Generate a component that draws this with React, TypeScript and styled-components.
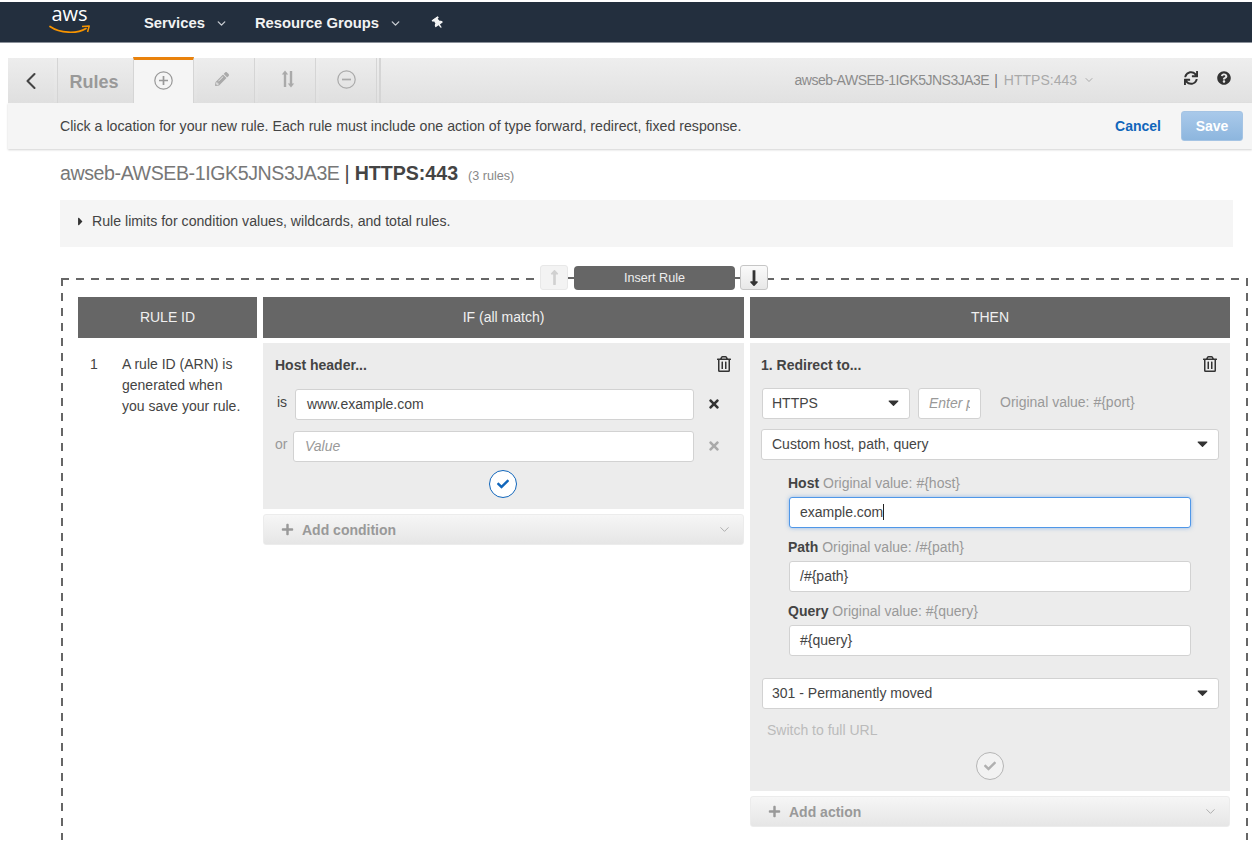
import React from "react";
import styled, { createGlobalStyle } from "styled-components";
import { ChevronDown, ChevronLeft } from "lucide-react";
import {
  FaCaretDown,
  FaCaretRight,
  FaCheck,
  FaLongArrowAltDown,
  FaLongArrowAltUp,
  FaPencilAlt,
  FaPlus,
  FaQuestionCircle,
  FaRegTrashAlt,
  FaSync,
  FaThumbtack,
  FaTimes,
} from "react-icons/fa";

const Global = createGlobalStyle`
  html, body { margin: 0; padding: 0; background: #fff; }
  body { font-family: "Liberation Sans", Arial, sans-serif; color: #444; width: 1252px; height: 854px; overflow: hidden; }
  * { box-sizing: border-box; }
`;

const TopNav = styled.header`
  margin-top: 2px;
  height: 41px;
  background: #232f3e;
  border-bottom: 1px solid #8b919a;
  display: flex;
  align-items: center;
  color: #fff;
  padding: 2px 0 0 49px;
`;
const Logo = styled.div`
  width: 41px;
  height: 34px;
  margin-right: 54px;
  margin-top: -6px;
  display: flex;
  flex-direction: column;
  align-items: center;
`;
const LogoText = styled.span`
  font-family: "Open Sans", sans-serif;
  font-size: 20px;
  line-height: 22px;
  color: #fff;
`;
const NavItem = styled.div`
  display: flex;
  align-items: center;
  gap: 10px;
  font-size: 14.8px;
  font-weight: 700;
  color: #f2f3f3;
  margin-right: 27px;
  svg { color: #c8ccd2; }
`;
const Pin = styled.div`
  display: flex;
  margin-left: 3px;
  color: #f2f3f3;
  transform: rotate(-35deg);
`;

const Toolbar = styled.div`
  margin: 15px 0 0 8px;
  height: 45px;
  background: linear-gradient(#eeeeee, #e1e1e1);
  display: flex;
  align-items: stretch;
`;
const BackTab = styled.div`
  width: 46px;
  display: flex;
  align-items: center;
  justify-content: center;
  color: #444;
  padding-right: 1px;
  background: linear-gradient(#ededed, #dfdfdf);
`;
const RulesTab = styled.div`
  width: 76px;
  margin-left: 3px;
  border-left: 1px solid #d5d5d5;
  display: flex;
  align-items: center;
  justify-content: center;
  padding: 3px 3px 0 0;
  font-size: 18px;
  font-weight: 700;
  color: #999;
  background: linear-gradient(#ededed, #dfdfdf);
`;
const IconTab = styled.div<{ $active?: boolean; $nudge?: number }>`
  width: ${(p) => (p.$active ? "61px" : "58px")};
  margin-left: ${(p) => (p.$active ? "0" : "3px")};
  display: flex;
  align-items: center;
  justify-content: center;
  padding-bottom: 3px;
  color: #aaa;
  background: ${(p) => (p.$active ? "#f5f5f5" : "linear-gradient(#ededed, #dfdfdf)")};
  border-top: ${(p) => (p.$active ? "3px solid #e9820c" : "none")};
  border-left: ${(p) => (p.$active ? "1px solid #d5d5d5" : "none")};
  border-right: 1px solid #d5d5d5;
  margin-top: ${(p) => (p.$active ? "-1px" : "0")};
  height: ${(p) => (p.$active ? "46px" : "45px")};
  svg { margin-left: ${(p) => p.$nudge ?? 0}px; }
`;
const TabRule = styled.div`
  width: 2px;
  margin-left: 2px;
  background: #d5d5d5;
`;
const Listener = styled.div`
  margin-left: auto;
  display: flex;
  align-items: center;
  font-size: 14px;
  color: #8c8c8c;
  padding-bottom: 1px;
`;
const ListenerName = styled.span`
  letter-spacing: -0.5px;
`;
const ListenerPipe = styled.span`
  margin: 0 6px 0 5px;
  color: #777;
`;
const ListenerPort = styled.span`
  color: #aaa;
  margin-right: 6px;
`;
const ToolIcons = styled.div`
  width: 157px;
  display: flex;
  align-items: center;
  justify-content: flex-end;
  gap: 19px;
  padding: 0 21px 5px 0;
  color: #333;
`;

const InfoBar = styled.div`
  margin-left: 8px;
  height: 46px;
  background: #f5f5f5;
  box-shadow: 0 1px 2px rgba(0, 0, 0, 0.18);
  display: flex;
  align-items: center;
  padding: 0 9px 0 52px;
  font-size: 14.16px;
  color: #444;
`;
const Cancel = styled.span`
  margin-left: auto;
  font-weight: 700;
  font-size: 14px;
  color: #1166bb;
`;
const SaveButton = styled.button`
  margin-left: 20px;
  width: 62px;
  height: 30px;
  border: 1px solid #a5c4e4;
  border-radius: 3px;
  background: linear-gradient(#a9c9ea, #8db6de);
  color: #fff;
  font: 700 14px "Liberation Sans", Arial, sans-serif;
  padding: 0;
`;

const Main = styled.main`
  padding-left: 60px;
`;
const Heading = styled.h1`
  margin: 0;
  padding-top: 12px;
  height: 51px;
  display: flex;
  align-items: baseline;
  font-size: 19.6px;
  font-weight: 400;
  line-height: 24px;
  color: #777;
`;
const HeadingName = styled.span`
  letter-spacing: -0.42px;
`;
const HeadingStrong = styled.strong`
  color: #444;
  font-weight: 700;
  margin-left: 5px;
`;
const HeadingPipe = styled.span`
  color: #444;
  margin-left: 5px;
`;
const RuleCount = styled.small`
  font-size: 12.6px;
  color: #888;
  margin-left: 10px;
`;
const Limits = styled.div`
  width: 1173px;
  height: 47px;
  background: #f5f5f5;
  display: flex;
  align-items: center;
  gap: 5px;
  padding: 0 0 5px 14px;
  font-size: 14.15px;
  color: #444;
`;

const dash = (deg: number) =>
  `repeating-linear-gradient(${deg}deg, #666 0 8px, transparent 8px 15px)`;

const Frame = styled.section`
  position: relative;
  margin: 31px 0 0 1px;
  width: 1187px;
  height: 562px;
  padding: 19px 0 0 17px;
  background-image: ${dash(90)}, ${dash(180)}, ${dash(180)};
  background-size: 100% 2px, 2px 100%, 2px 100%;
  background-position: 0 0, 0 0, 100% 0;
  background-repeat: no-repeat;
`;
const InsertControls = styled.div`
  position: absolute;
  top: -13px;
  left: 479px;
  display: flex;
  align-items: center;
  background: #fff;
`;
const ArrowButton = styled.div<{ $disabled?: boolean }>`
  width: 28px;
  height: 25px;
  border-radius: 3px;
  border: 1px solid ${(p) => (p.$disabled ? "#e8e8e8" : "#c6c6c6")};
  background: ${(p) => (p.$disabled ? "#f3f3f3" : "linear-gradient(#fafafa, #e8e8e8)")};
  color: ${(p) => (p.$disabled ? "#d0d0d0" : "#333")};
  display: flex;
  align-items: center;
  justify-content: center;
`;
const Connector = styled.div<{ $w: number }>`
  width: ${(p) => p.$w}px;
  height: 2px;
  background: #666;
`;
const InsertButton = styled.div`
  width: 161px;
  height: 24px;
  border-radius: 4px;
  background: #666;
  color: #eee;
  font-size: 12.6px;
  display: flex;
  align-items: center;
  justify-content: center;
`;

const Grid = styled.div`
  display: grid;
  grid-template-columns: 179px 481px 480px;
  column-gap: 6px;
  row-gap: 5px;
  grid-template-rows: 41px auto;
`;
const ColumnHeader = styled.div`
  background: #666;
  color: #f0f0f0;
  font-size: 14px;
  display: flex;
  align-items: center;
  justify-content: center;
  padding-bottom: 2px;
`;
const RuleCell = styled.div`
  display: grid;
  grid-template-columns: 32px 1fr;
  padding: 11px 0 0 12px;
  font-size: 14px;
  line-height: 21px;
  color: #444;
`;
const Stack = styled.div`
  display: flex;
  flex-direction: column;
  gap: 5px;
`;
const Card = styled.div<{ $h: number }>`
  background: #ececec;
  height: ${(p) => p.$h}px;
  padding-left: 11px;
`;
const CardTitle = styled.div<{ $mb: number; $pl?: number }>`
  height: 44px;
  margin-bottom: ${(p) => p.$mb}px;
  display: flex;
  align-items: center;
  justify-content: space-between;
  font-size: 14px;
  font-weight: 700;
  color: #444;
  padding: 0 12px 0 ${(p) => p.$pl ?? 0}px;
  svg { color: #333; margin-top: -2px; }
`;
const ConditionRow = styled.div<{ $muted?: boolean }>`
  display: flex;
  align-items: center;
  height: 31px;
  margin-bottom: 11px;
  padding-left: ${(p) => (p.$muted ? "1px" : "3px")};
  color: ${(p) => (p.$muted ? "#999" : "#444")};
`;
const RowWord = styled.span<{ $w: number }>`
  width: ${(p) => p.$w}px;
  font-size: 14px;
  margin-top: -5px;
`;
const Field = styled.div<{ $w: number; $focus?: boolean; $placeholder?: boolean; $ml?: number; $pl?: number }>`
  width: ${(p) => p.$w}px;
  height: 31px;
  flex: none;
  margin-left: ${(p) => p.$ml ?? 0}px;
  background: #fff;
  border: 1px solid ${(p) => (p.$focus ? "#4f97e8" : "#d2d2d2")};
  box-shadow: ${(p) => (p.$focus ? "0 0 4px rgba(70, 140, 225, 0.55)" : "none")};
  border-radius: 3px;
  display: flex;
  align-items: center;
  padding: 0 10px 2px ${(p) => p.$pl ?? 10}px;
  font-size: 14px;
  font-style: ${(p) => (p.$placeholder ? "italic" : "normal")};
  color: ${(p) => (p.$placeholder ? "#999" : "#444")};
  white-space: nowrap;
  overflow: hidden;
`;
const ClippedText = styled.span`
  width: 41px;
  overflow: hidden;
`;
const TextCaret = styled.span`
  width: 1px;
  height: 16px;
  background: #222;
`;
const ClearIcon = styled.div`
  margin: -2px 0 0 13px;
  display: flex;
`;
const CircleCheck = styled.div<{ $on?: boolean; $size: number }>`
  width: ${(p) => p.$size}px;
  height: ${(p) => p.$size}px;
  margin: 0 auto;
  border-radius: 50%;
  border: 1px solid ${(p) => (p.$on ? "#1166bb" : "#b5b5b5")};
  background: ${(p) => (p.$on ? "#fff" : "#f2f2f2")};
  color: ${(p) => (p.$on ? "#1166bb" : "#b0b0b0")};
  display: flex;
  align-items: center;
  justify-content: center;
`;
const CheckSlot = styled.div<{ $offset: number; $shift: number }>`
  margin-top: ${(p) => p.$offset}px;
  margin-left: ${(p) => p.$shift}px;
`;
const AddBar = styled.div`
  height: 31px;
  border: 1px solid #ececec;
  border-radius: 3px;
  background: linear-gradient(#f6f6f6, #e6e6e6);
  display: flex;
  align-items: center;
  gap: 8px;
  padding: 0 11px 0 17px;
  font-size: 14px;
  font-weight: 700;
  color: #999;
  svg:last-child { margin-left: auto; color: #aaa; }
`;
const ActionRow = styled.div`
  display: flex;
  align-items: center;
  height: 31px;
  padding-left: 1px;
  margin-bottom: 10px;
`;
const SelectBox = styled.div<{ $w: number; $ml?: number; $mt?: number; $pl?: number }>`
  width: ${(p) => p.$w}px;
  margin-left: ${(p) => p.$ml ?? 0}px;
  margin-top: ${(p) => p.$mt ?? 0}px;
  height: 31px;
  flex: none;
  background: #fff;
  border: 1px solid #d2d2d2;
  border-radius: 3px;
  display: flex;
  align-items: center;
  justify-content: space-between;
  padding: 0 7px 2px ${(p) => p.$pl ?? 10}px;
  font-size: 14px;
  color: #444;
  svg { color: #333; }
`;
const Hint = styled.span`
  font-size: 14px;
  color: #999;
  margin: -4px 0 0 19px;
`;
const SubForm = styled.div`
  padding: 13px 0 0 27px;
`;
const SubLabel = styled.div`
  font-size: 14px;
  height: 24px;
  line-height: 20px;
  color: #999;
  white-space: pre;
`;
const SubName = styled.strong`
  color: #444;
`;
const SubField = styled.div`
  margin: 0 0 9px 1px;
`;
const SwitchLink = styled.div`
  font-size: 14px;
  color: #bbb;
  margin: 13px 0 0 6px;
`;

const PlusCircle = () => (
  <svg width="19" height="19" viewBox="0 0 19 19" fill="none" stroke="#999">
    <circle cx="9.5" cy="9.5" r="8.7" strokeWidth="1.2" />
    <path d="M9.5 5v9M5 9.5h9" strokeWidth="1.7" />
  </svg>
);
const MinusCircle = () => (
  <svg width="19" height="19" viewBox="0 0 19 19" fill="none" stroke="#aaa">
    <circle cx="9.5" cy="9.5" r="8.7" strokeWidth="1.2" />
    <path d="M5 9.5h9" strokeWidth="1.7" />
  </svg>
);
const SortArrows = () => (
  <svg width="14" height="18" viewBox="0 0 14 18" fill="#aaa">
    <path d="M3 0.5 6.2 4.5H4.2V17H1.8V4.5H-0.2Z" transform="translate(1)" />
    <path d="M10 17.5 6.8 13.5H8.8V1H11.2V13.5H13.2Z" />
  </svg>
);
const Smile = () => (
  <svg width="42" height="10" viewBox="0 0 42 10" fill="none">
    <path d="M1 1.5C11 8.5 28 9 37 3.5" stroke="#f79400" strokeWidth="1.7" strokeLinecap="round" />
    <path d="M33 1.5 40.2 1 38.6 7" stroke="#f79400" strokeWidth="1.5" fill="none" strokeLinejoin="round" />
  </svg>
);

export default function App() {
  return (
    <>
      <Global />
      <TopNav>
        <Logo>
          <LogoText>aws</LogoText>
          <Smile />
        </Logo>
        <NavItem>
          Services <ChevronDown size={13} strokeWidth={2.5} />
        </NavItem>
        <NavItem>
          Resource Groups <ChevronDown size={13} strokeWidth={2.5} />
        </NavItem>
        <Pin>
          <FaThumbtack size={12} />
        </Pin>
      </TopNav>

      <Toolbar>
        <BackTab>
          <ChevronLeft size={28} strokeWidth={1.8} />
        </BackTab>
        <RulesTab>Rules</RulesTab>
        <IconTab $active>
          <PlusCircle />
        </IconTab>
        <IconTab $nudge={-8}>
          <FaPencilAlt size={14} />
        </IconTab>
        <IconTab $nudge={2}>
          <SortArrows />
        </IconTab>
        <IconTab $nudge={-2}>
          <MinusCircle />
        </IconTab>
        <TabRule />
        <Listener>
          <ListenerName>awseb-AWSEB-1IGK5JNS3JA3E</ListenerName>
          <ListenerPipe>|</ListenerPipe>
          <ListenerPort>HTTPS:443</ListenerPort>
          <ChevronDown size={12} color="#aaa" />
        </Listener>
        <ToolIcons>
          <FaSync size={14} />
          <FaQuestionCircle size={14} />
        </ToolIcons>
      </Toolbar>

      <InfoBar>
        Click a location for your new rule. Each rule must include one action of type forward, redirect, fixed response.
        <Cancel>Cancel</Cancel>
        <SaveButton>Save</SaveButton>
      </InfoBar>

      <Main>
        <Heading>
          <HeadingName>awseb-AWSEB-1IGK5JNS3JA3E</HeadingName>
          <HeadingPipe>|</HeadingPipe>
          <HeadingStrong>HTTPS:443</HeadingStrong>
          <RuleCount>(3 rules)</RuleCount>
        </Heading>
        <Limits>
          <FaCaretRight size={13} color="#333" />
          Rule limits for condition values, wildcards, and total rules.
        </Limits>

        <Frame>
          <InsertControls>
            <ArrowButton $disabled>
              <FaLongArrowAltUp size={17} />
            </ArrowButton>
            <Connector $w={6} />
            <InsertButton>Insert Rule</InsertButton>
            <Connector $w={5} />
            <ArrowButton>
              <FaLongArrowAltDown size={18} />
            </ArrowButton>
          </InsertControls>

          <Grid>
            <ColumnHeader>RULE ID</ColumnHeader>
            <ColumnHeader>IF (all match)</ColumnHeader>
            <ColumnHeader>THEN</ColumnHeader>

            <RuleCell>
              <span>1</span>
              <span>
                A rule ID (ARN) is
                <br />
                generated when
                <br />
                you save your rule.
              </span>
            </RuleCell>

            <Stack>
              <Card $h={166}>
                <CardTitle $mb={2} $pl={1}>
                  Host header...
                  <FaRegTrashAlt size={16} />
                </CardTitle>
                <ConditionRow>
                  <RowWord $w={18}>is</RowWord>
                  <Field $w={399} $pl={11}>www.example.com</Field>
                  <ClearIcon>
                    <FaTimes size={14} color="#333" />
                  </ClearIcon>
                </ConditionRow>
                <ConditionRow $muted>
                  <RowWord $w={18}>or</RowWord>
                  <Field $w={401} $pl={11} $placeholder>
                    Value
                  </Field>
                  <ClearIcon>
                    <FaTimes size={14} color="#aaa" />
                  </ClearIcon>
                </ConditionRow>
                <CheckSlot $offset={-3} $shift={-12}>
                  <CircleCheck $on $size={28}>
                    <FaCheck size={12} />
                  </CircleCheck>
                </CheckSlot>
              </Card>
              <AddBar>
                <FaPlus size={13} />
                Add condition
                <ChevronDown size={15} strokeWidth={1.5} />
              </AddBar>
            </Stack>

            <Stack>
              <Card $h={448}>
                <CardTitle $mb={1}>
                  1. Redirect to...
                  <FaRegTrashAlt size={16} />
                </CardTitle>
                <ActionRow>
                  <SelectBox $w={148} $pl={9}>
                    HTTPS
                    <FaCaretDown size={17} />
                  </SelectBox>
                  <Field $w={63} $ml={8} $placeholder>
                    <ClippedText>Enter port</ClippedText>
                  </Field>
                  <Hint>Original value: #{"{port}"}</Hint>
                </ActionRow>
                <SelectBox $w={458}>
                  Custom host, path, query
                  <FaCaretDown size={17} />
                </SelectBox>
                <SubForm>
                  <SubLabel>
                    <SubName>Host</SubName> Original value: #{"{host}"}
                  </SubLabel>
                  <SubField>
                    <Field $w={402} $focus>
                      example.com
                      <TextCaret />
                    </Field>
                  </SubField>
                  <SubLabel>
                    <SubName>Path</SubName> Original value: /#{"{path}"}
                  </SubLabel>
                  <SubField>
                    <Field $w={402}>/#{"{path}"}</Field>
                  </SubField>
                  <SubLabel>
                    <SubName>Query</SubName> Original value: #{"{query}"}
                  </SubLabel>
                  <SubField>
                    <Field $w={402}>#{"{query}"}</Field>
                  </SubField>
                </SubForm>
                <SelectBox $w={457} $ml={1} $mt={22} $pl={9}>
                  301 - Permanently moved
                  <FaCaretDown size={17} />
                </SelectBox>
                <SwitchLink>Switch to full URL</SwitchLink>
                <CheckSlot $offset={14} $shift={-11}>
                  <CircleCheck $size={28}>
                    <FaCheck size={12} />
                  </CircleCheck>
                </CheckSlot>
              </Card>
              <AddBar>
                <FaPlus size={13} />
                Add action
                <ChevronDown size={15} strokeWidth={1.5} />
              </AddBar>
            </Stack>
          </Grid>
        </Frame>
      </Main>
    </>
  );
}
